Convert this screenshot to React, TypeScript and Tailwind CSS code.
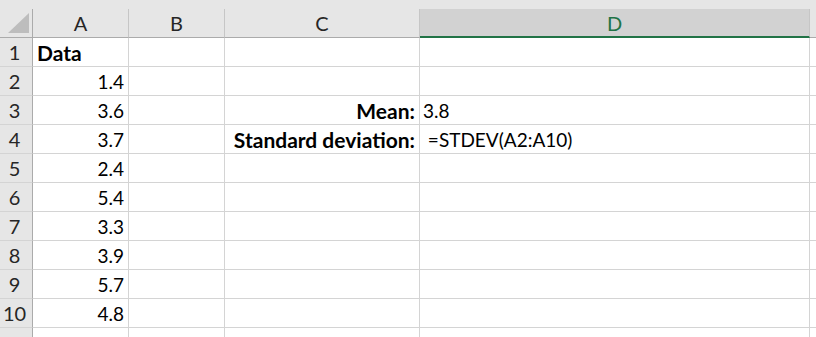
import React from "react";

const data = ["1.4", "3.6", "3.7", "2.4", "5.4", "3.3", "3.9", "5.7", "4.8"];

export default function App() {
  const rows: { a: React.ReactNode; c: React.ReactNode; d: React.ReactNode }[] = [];
  rows.push({ a: <span className="font-bold text-[21px] pl-[4px]">Data</span>, c: null, d: null });
  data.forEach((v, i) => {
    let c: React.ReactNode = null;
    let d: React.ReactNode = null;
    if (i === 1) {
      c = <span className="font-bold text-[21px] w-full text-right pr-[4px]">Mean:</span>;
      d = <span className="pl-[3px]">3.8</span>;
    }
    if (i === 2) {
      c = <span className="font-bold text-[21px] w-full text-right pr-[4px]">Standard deviation:</span>;
      d = <span className="pl-[3px]">&nbsp;=STDEV(A2:A10)</span>;
    }
    rows.push({ a: <span className="w-full text-right pr-[4px]">{v}</span>, c, d });
  });

  const cell = "h-[29px] border-r border-b border-[#d4d4d4] flex items-center overflow-hidden whitespace-nowrap text-[19px]";

  return (
    <div
      className="w-[816px] h-[337px] overflow-hidden bg-white text-black"
      style={{ fontFamily: "Lato, 'Noto Sans', sans-serif" }}
    >
      <div className="h-[9px] bg-[#e6e6e6]" />
      <div className="grid grid-cols-[33px_96px_96px_195px_390px_1fr] text-[20px] leading-none">
        {/* header row */}
        <div className="h-[29px] bg-[#e6e6e6] border-r border-b border-[#ababab] relative">
          <svg className="absolute left-[8px] top-[4px]" width="22" height="21" viewBox="0 0 22 21">
            <polygon points="21,0 21,20 0,20" fill="#bdbdbd" />
          </svg>
        </div>
        {["A", "B", "C"].map((h) => (
          <div
            key={h}
            className="h-[29px] bg-[#e6e6e6] border-r border-r-[#c6c6c6] border-b border-b-[#ababab] flex items-center justify-center text-[#262626]"
          >
            {h}
          </div>
        ))}
        <div className="h-[29px] bg-[#d2d2d2] border-r border-r-[#c6c6c6] border-b-2 border-b-[#217346] flex items-center justify-center text-[#217346]">
          D
        </div>
        <div className="h-[29px] bg-[#e6e6e6] border-b border-[#ababab]" />

        {rows.map((r, i) => (
          <React.Fragment key={i}>
            <div className="h-[29px] bg-[#e6e6e6] border-r border-r-[#ababab] border-b border-b-[#d4d4d4] flex items-center justify-center pr-[3px] text-[#262626]">
              {i + 1}
            </div>
            <div className={cell}>{r.a}</div>
            <div className={cell} />
            <div className={cell}>{r.c}</div>
            <div className={cell}>{r.d}</div>
            <div className="h-[29px] border-b border-[#d4d4d4]" />
          </React.Fragment>
        ))}
        <div className="h-[29px] bg-[#e6e6e6] border-r border-r-[#ababab] flex items-center justify-center pr-[3px] text-[#262626]">
          11
        </div>
        <div className="h-[29px] border-r border-[#d4d4d4]" />
        <div className="h-[29px] border-r border-[#d4d4d4]" />
        <div className="h-[29px] border-r border-[#d4d4d4]" />
        <div className="h-[29px] border-r border-[#d4d4d4]" />
        <div className="h-[29px]" />
      </div>
    </div>
  );
}
